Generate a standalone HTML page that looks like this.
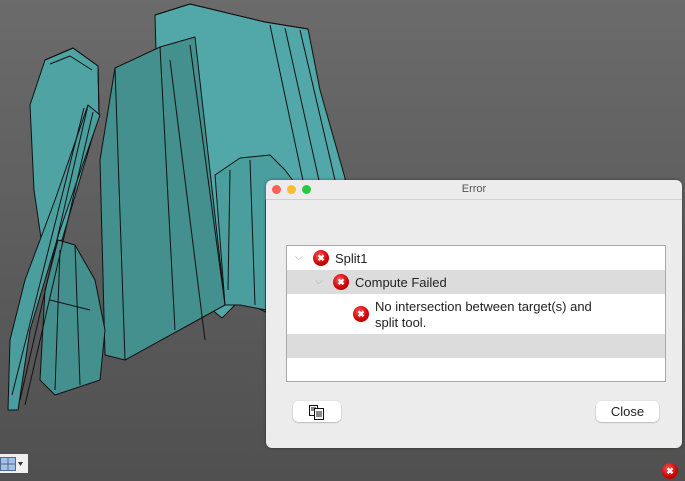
<!DOCTYPE html>
<html><head><style>
*{margin:0;padding:0;box-sizing:border-box}
body{width:685px;height:481px;overflow:hidden;position:relative;background:linear-gradient(#6b6b6b,#5a5a5a 60%,#505050);font-family:"Liberation Sans",sans-serif}
.dlg{position:absolute;left:266px;top:180px;width:416px;height:268px;background:#ececec;border-radius:6px;box-shadow:0 0 3px rgba(0,0,0,.4)}
.tb{height:20px;border-bottom:1px solid #d0d0d0;text-align:center;font-size:11px;color:#555;line-height:19px;position:relative}
.dot{position:absolute;top:5px;width:9px;height:9px;border-radius:50%}
.list{position:absolute;left:20px;top:65px;width:380px;height:137px;background:#fff;border:1px solid #a8a8a8}
.row{position:absolute;left:0;width:378px;font-size:13px;color:#222}
.ic{position:absolute;width:16px;height:16px;border-radius:50%;background:radial-gradient(circle at 40% 35%,#f55,#c00 60%,#900);color:#fff;font-size:9px;font-weight:bold;text-align:center;line-height:16px}
.chev{position:absolute;color:#aaa;font-size:10px}
.btn{position:absolute;top:221px;height:21px;background:#fff;border-radius:5px;box-shadow:0 0.5px 1.5px rgba(0,0,0,.35);font-size:13px;text-align:center;line-height:21px;color:#222}
</style></head><body>
<svg width="685" height="481" style="position:absolute;left:0;top:0" stroke="#111" stroke-width="1" stroke-linejoin="round">
<polygon points="155,15 190,4 265,22 308,29 320,90 345,178 345,200 266,200 266,312 240,300 222,318 200,300 170,320 160,200" fill="#52a8a8"/>
<polygon points="115,68 160,47 195,37 225,305 125,360 105,355 100,160" fill="#44908f"/>
<polygon points="30,105 45,60 73,48 98,66 99,115 62,240 42,245 34,190" fill="#4fa3a3"/>
<polygon points="215,175 240,158 270,155 285,170 300,190 266,200 266,310 240,305 225,305" fill="#4a9e9e"/>
<polygon points="88,105 100,115 60,230 30,330 18,410 8,410 10,340 25,280 55,200" fill="#4a9e9e"/>
<polygon points="58,240 75,245 95,280 105,330 100,380 55,395 40,380 45,290" fill="#44908f"/>
<g fill="none">
<path d="M115,68 L125,360 M160,47 L175,330 M170,60 L205,340 M190,45 L225,305"/>
<path d="M270,25 L305,190 M285,28 L320,185 M300,30 L335,180"/>
<path d="M45,60 L73,48 L98,66 L99,115 M50,64 L70,56 L92,70"/>
<path d="M88,105 L20,400 M93,112 L25,405 M84,108 L12,395"/>
<path d="M230,170 L228,290 M250,160 L255,305"/>
<path d="M60,250 L55,390 M75,245 L80,385 M50,300 L90,310"/>
<path d="M155,15 L190,4 L265,22 L308,29"/>
</g>
</svg>
<div style="position:absolute;left:0;top:454px;width:28px;height:19px;background:#f0f0f0"></div>
<svg style="position:absolute;left:0;top:457px" width="28" height="14"><rect x="0.5" y="0.5" width="15" height="13" fill="#a9c0e0" stroke="#4a6a9a"/><line x1="8" y1="0" x2="8" y2="14" stroke="#4a6a9a"/><line x1="0" y1="7" x2="16" y2="7" stroke="#4a6a9a"/><path d="M18,5 L23,5 L20.5,9Z" fill="#333"/></svg>
<div class="ic" style="left:662px;top:463px">✖</div>
<div class="dlg">
<div class="tb"><span class="dot" style="left:6px;background:#fe5f57"></span><span class="dot" style="left:21px;background:#febc2e"></span><span class="dot" style="left:36px;background:#28c840"></span>Error</div>
<div class="list">
<div class="row" style="top:0;height:24px"><span class="chev" style="left:8px;top:6px">⌵</span><span class="ic" style="left:26px;top:4px">✖</span><span style="position:absolute;left:48px;top:5px">Split1</span></div>
<div class="row" style="top:24px;height:24px;background:#dcdcdc"><span class="chev" style="left:28px;top:6px">⌵</span><span class="ic" style="left:46px;top:4px">✖</span><span style="position:absolute;left:68px;top:5px">Compute Failed</span></div>
<div class="row" style="top:48px;height:40px"><span class="ic" style="left:66px;top:12px">✖</span><span style="position:absolute;left:88px;top:5px;line-height:16px">No intersection between target(s) and<br>split tool.</span></div>
<div class="row" style="top:88px;height:24px;background:#dcdcdc"></div>
</div>
<div class="btn" style="left:27px;width:48px"><svg width="18" height="16" style="margin-top:3px" fill="#fff" stroke="#111"><rect x="1.5" y="1.5" width="8" height="10"/><rect x="6.5" y="4.5" width="9" height="11"/><path d="M3,4H8M3,6H6M8,8H14M8,10H14M8,12H14"/></svg></div>
<div class="btn" style="left:330px;width:63px">Close</div>
</div>
</body></html>
